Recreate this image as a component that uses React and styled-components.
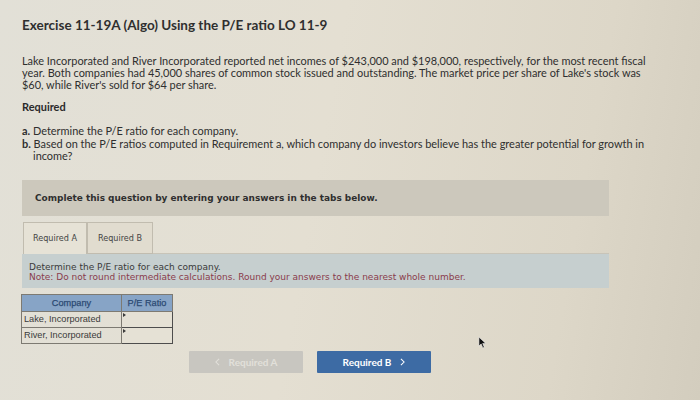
import React from 'react'
import styled, { createGlobalStyle } from 'styled-components'

const GlobalStyle = createGlobalStyle`
  html, body {
    margin: 0;
    padding: 0;
    background: #dfdacd;
  }
`

const rows = ['Lake, Incorporated', 'River, Incorporated']

const App = () => (
  <>
    <GlobalStyle />
    <Page>
      <Title>Exercise 11-19A (Algo) Using the P/E ratio LO 11-9</Title>
      <Paragraph>
        Lake Incorporated and River Incorporated reported net incomes of $243,000 and $198,000, respectively, for the most recent fiscal<br />
        year. Both companies had 45,000 shares of common stock issued and outstanding. The market price per share of Lake's stock was<br />
        $60, while River's sold for $64 per share.
      </Paragraph>
      <Label>Required</Label>
      <List>
        <Item><b>a.</b> Determine the P/E ratio for each company.</Item>
        <Item><b>b.</b> Based on the P/E ratios computed in Requirement a, which company do investors believe has the greater potential for growth in<br />income?</Item>
      </List>
      <Banner>Complete this question by entering your answers in the tabs below.</Banner>
      <Tabs>
        <Tab $active>Required A</Tab>
        <Tab>Required B</Tab>
        <TabFill />
      </Tabs>
      <Panel>
        <div>Determine the P/E ratio for each company.</div>
        <Note>Note: Do not round intermediate calculations. Round your answers to the nearest whole number.</Note>
      </Panel>
      <Table>
        <thead>
          <tr>
            <Head style={{ width: 99 }}>Company</Head>
            <Head>P/E Ratio</Head>
          </tr>
        </thead>
        <tbody>
          {rows.map(r => (
            <tr key={r}>
              <NameCell>{r}</NameCell>
              <InputCell><Marker /></InputCell>
            </tr>
          ))}
        </tbody>
      </Table>
      <Buttons>
        <NavButton $disabled>
          <Chevron viewBox="0 0 6 10"><path d="M5 1 L1 5 L5 9" /></Chevron>
          Required A
        </NavButton>
        <NavButton>
          Required B
          <Chevron viewBox="0 0 6 10"><path d="M1 1 L5 5 L1 9" /></Chevron>
        </NavButton>
      </Buttons>
      <Cursor viewBox="0 0 10 14">
        <path d="M1 1 L1 11 L3.5 8.6 L5.4 13 L7 12.3 L5.2 8 L8.6 8 Z" fill="#111" stroke="#fff" strokeWidth="0.6" />
      </Cursor>
    </Page>
  </>
)

const Page = styled.div`
  position: relative;
  width: 700px;
  height: 400px;
  overflow: hidden;
  box-sizing: border-box;
  padding: 16px 22px 0;
  background: linear-gradient(100deg, #e2e0d7 0%, #e4dfd2 45%, #ddd7c8 80%, #d3cdbe 100%);
  font-family: Lato, "Open Sans", sans-serif;
  color: #2b2b2b;
`
const Title = styled.h1`
  margin: 0;
  font-size: 13.5px;
  line-height: 18px;
  font-weight: 700;
  color: #2f2f2f;
`
const Paragraph = styled.p`
  margin: 21px 0 0;
  white-space: nowrap;
  font-size: 10.95px;
  line-height: 12px;
  color: #2f2f2f;
`
const Label = styled.div`
  margin-top: 10px;
  font-size: 10.95px;
  line-height: 12px;
  font-weight: 700;
  color: #2a2a2a;
`
const List = styled.div`
  margin-top: 12px;
  font-size: 10.95px;
  line-height: 12.5px;
  color: #2f2f2f;
  white-space: nowrap;
`
const Item = styled.div`
  padding-left: 11px;
  text-indent: -11px;
  b { font-weight: 700; }
`
const Banner = styled.div`
  margin-top: 17px;
  width: 587px;
  height: 36px;
  box-sizing: border-box;
  padding-left: 13px;
  display: flex;
  align-items: center;
  background: #ccc8bc;
  font-family: "DejaVu Sans", Verdana, sans-serif;
  font-size: 8.95px;
  font-weight: 700;
  color: #2f2f2f;
`
const Tabs = styled.div`
  margin-top: 6px;
  width: 587px;
  display: flex;
  height: 32px;
`
const Tab = styled.div`
  width: ${p => (p.$active ? '64px' : '66px')};
  box-sizing: border-box;
  display: flex;
  align-items: center;
  justify-content: center;
  border: 1px solid #c1bcaf;
  border-bottom: ${p => (p.$active ? 'none' : '1px solid #c1bcaf')};
  margin-left: ${p => (p.$active ? '1px' : '0')};
  background: ${p => (p.$active ? '#e6e2d6' : '#e1dccf')};
  font-family: "DejaVu Sans", Verdana, sans-serif;
  font-size: 8.1px;
  color: #444;
`
const TabFill = styled.div`
  flex: 1;
  border-bottom: 1px solid #c8c4b8;
`
const Panel = styled.div`
  width: 587px;
  height: 34px;
  box-sizing: border-box;
  padding: 8px 0 0 7px;
  background: #c6cfcf;
  font-family: "DejaVu Sans", Verdana, sans-serif;
  font-size: 9px;
  line-height: 10.5px;
  color: #3a3a3a;
`
const Note = styled.div`
  color: #8a3c4c;
`
const Table = styled.table`
  margin-top: 6px;
  margin-left: -1px;
  border-collapse: collapse;
  width: 152px;
  font-family: "Liberation Sans", Arial, sans-serif;
  font-size: 9.2px;
`
const Head = styled.th`
  height: 16px;
  padding: 0;
  background: #87a4c6;
  border: 1px solid #7d7a72;
  font-weight: 400;
  color: #2c4a73;
  -webkit-text-stroke: 0.25px #2c4a73;
`
const NameCell = styled.td`
  height: 15px;
  padding: 0 0 0 2px;
  border: 1px solid #7d7a72;
  color: #3a3a3a;
  white-space: nowrap;
`
const InputCell = styled.td`
  position: relative;
  padding: 0;
  border: 1.5px solid #4d4d4d;
  background: #e5e1d5;
`
const Marker = styled.span`
  position: absolute;
  left: 1px;
  top: 1px;
  width: 0;
  height: 0;
  border-top: 2px solid transparent;
  border-bottom: 2px solid transparent;
  border-left: 3px solid #3a3a3a;
`
const Buttons = styled.div`
  margin: 7px 0 0 167px;
  display: flex;
  gap: 14px;
`
const NavButton = styled.div`
  width: 114px;
  height: 22px;
  display: flex;
  align-items: center;
  justify-content: center;
  gap: 9px;
  border-radius: 1px;
  background: ${p => (p.$disabled ? '#c8c6c0' : '#3d6ba4')};
  color: ${p => (p.$disabled ? '#e2e0da' : '#ffffff')};
  font-size: 10px;
  font-weight: 700;
`
const Chevron = styled.svg`
  width: 5px;
  height: 8px;
  fill: none;
  stroke: currentColor;
  stroke-width: 1.3;
`
const Cursor = styled.svg`
  position: absolute;
  left: 478px;
  top: 336px;
  width: 9px;
  height: 13px;
`

export default App
